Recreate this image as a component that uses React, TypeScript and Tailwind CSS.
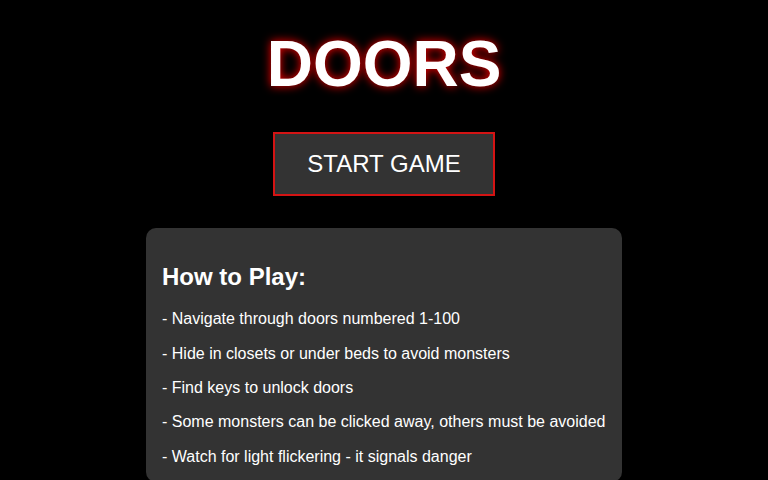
import React from 'react';

const rules = [
  '- Navigate through doors numbered 1-100',
  '- Hide in closets or under beds to avoid monsters',
  '- Find keys to unlock doors',
  '- Some monsters can be clicked away, others must be avoided',
  '- Watch for light flickering - it signals danger',
];

export default function App() {
  return (
    <div className="min-h-screen bg-black text-white flex flex-col items-center font-['Liberation_Sans',Arial,sans-serif]">
      <h1 className="mt-[28px] text-[64px] leading-[1.15] font-bold text-white [text-shadow:0_0_10px_#ff0000]">
        DOORS
      </h1>

      <button className="mt-[30px] px-[32px] py-[16px] text-[24px] leading-[28px] text-white bg-[#333] border-2 border-[#d41414]">
        START GAME
      </button>

      <div className="mt-[32px] w-[476px] bg-[#333] rounded-[10px] px-4 pt-[15px] pb-4">
        <h2 className="mt-[20px] mb-[20px] text-[24px] leading-[1.15] font-bold">How to Play:</h2>
        <div className="flex flex-col gap-4 text-[16px] leading-[1.15]">
          {rules.map((r) => (
            <p key={r}>{r}</p>
          ))}
        </div>
      </div>
    </div>
  );
}
